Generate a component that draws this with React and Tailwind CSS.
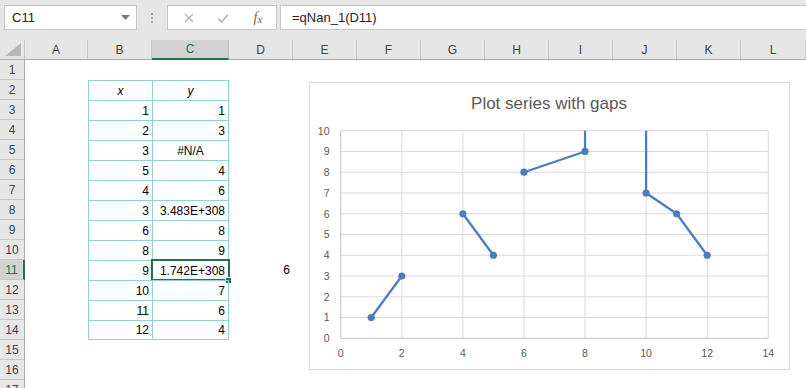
import React from 'react'

const cols = [
  { id: 'A', w: 63 },
  { id: 'B', w: 64 },
  { id: 'C', w: 77 },
  { id: 'D', w: 64 },
  { id: 'E', w: 64 },
  { id: 'F', w: 64 },
  { id: 'G', w: 64 },
  { id: 'H', w: 64 },
  { id: 'I', w: 64 },
  { id: 'J', w: 64 },
  { id: 'K', w: 64 },
  { id: 'L', w: 65 },
]

const xs = [1, 2, 3, 5, 4, 3, 6, 8, 9, 10, 11, 12]
const ys = ['1', '3', '#N/A', '4', '6', '3.483E+308', '8', '9', '1.742E+308', '7', '6', '4']

const cells = { B2: { t: 'x', italic: true, center: true }, C2: { t: 'y', italic: true, center: true }, D11: { t: '6' } }
xs.forEach((x, i) => {
  cells['B' + (i + 3)] = { t: String(x) }
  cells['C' + (i + 3)] = { t: ys[i], center: ys[i] === '#N/A' }
})

const rows = Array.from({ length: 17 }, (_, i) => i + 1)

const px = (x) => 30.7 + 30.54 * x
const py = (y) => 255.3 - 20.76 * y

const segments = [
  [[1, 1], [2, 3]],
  [[4, 6], [5, 4]],
  [[6, 8], [8, 9], [8, 10]],
  [[10, 10], [10, 7], [11, 6], [12, 4]],
]
const points = [[1, 1], [2, 3], [4, 6], [5, 4], [6, 8], [8, 9], [10, 7], [11, 6], [12, 4]]

function Chart() {
  const font = "'Liberation Sans', Arial, sans-serif"
  return (
    <div className="absolute left-[309px] top-[82px] w-[481px] h-[288px] border border-[#d9d9d9] bg-white">
      <svg width="479" height="286" className="block">
        <text x="239" y="26" textAnchor="middle" fontSize="17" fill="#595959" fontFamily={font}>
          Plot series with gaps
        </text>
        {Array.from({ length: 10 }, (_, i) => i + 1).map((y) => (
          <line key={'h' + y} x1={px(0)} x2={px(14)} y1={py(y)} y2={py(y)} stroke="#d9d9d9" strokeWidth="1" />
        ))}
        {[2, 4, 6, 8, 10, 12, 14].map((x) => (
          <line key={'v' + x} x1={px(x)} x2={px(x)} y1={py(10)} y2={py(0)} stroke="#d9d9d9" strokeWidth="1" />
        ))}
        <line x1={px(0)} x2={px(14)} y1={py(0)} y2={py(0)} stroke="#bfbfbf" strokeWidth="1" />
        <line x1={px(0)} x2={px(0)} y1={py(10)} y2={py(0)} stroke="#bfbfbf" strokeWidth="1" />
        {Array.from({ length: 11 }, (_, i) => i).map((y) => (
          <text key={'yl' + y} x="19.5" y={py(y) + 3.8} textAnchor="end" fontSize="10.5" fill="#595959" fontFamily={font}>
            {y}
          </text>
        ))}
        {[0, 2, 4, 6, 8, 10, 12, 14].map((x) => (
          <text key={'xl' + x} x={px(x)} y="273.7" textAnchor="middle" fontSize="10.5" fill="#595959" fontFamily={font}>
            {x}
          </text>
        ))}
        {segments.map((s, i) => (
          <polyline
            key={'s' + i}
            points={s.map(([x, y]) => `${px(x)},${py(y)}`).join(' ')}
            fill="none"
            stroke="#4a7dbb"
            strokeWidth="2.25"
            strokeLinejoin="round"
          />
        ))}
        {points.map(([x, y], i) => (
          <circle key={'p' + i} cx={px(x)} cy={py(y)} r="3.6" fill="#4a7dbb" />
        ))}
      </svg>
    </div>
  )
}

function FormulaBar() {
  return (
    <div className="h-[40px] bg-[#e6e6e6] flex items-start pt-[5px] pl-[4px]">
      <div className="w-[133px] h-[25px] bg-white border border-[#c6c6c6] flex items-center justify-between pl-[7px] pr-[6px] text-[13px] text-[#222]">
        <span>C11</span>
        <svg width="9" height="5" viewBox="0 0 9 5">
          <path d="M0 0 L9 0 L4.5 5 Z" fill="#7a7a7a" />
        </svg>
      </div>
      <div className="ml-[14px] mt-[8px] flex flex-col gap-[2px]">
        <div className="w-[2px] h-[2px] bg-[#a8a8a8]" />
        <div className="w-[2px] h-[2px] bg-[#a8a8a8]" />
        <div className="w-[2px] h-[2px] bg-[#a8a8a8]" />
      </div>
      <div className="ml-[14px] w-[110px] h-[25px] bg-white border border-[#c6c6c6] flex items-center">
        <div className="w-[38px] flex justify-center pl-[3px]">
          <svg width="10" height="10" viewBox="0 0 10 10">
            <path d="M1 1 L9 9 M9 1 L1 9" stroke="#b4b4b4" strokeWidth="1.3" />
          </svg>
        </div>
        <div className="w-[34px] flex justify-center">
          <svg width="12" height="10" viewBox="0 0 12 10">
            <path d="M1 5.5 L4.5 9 L11 1.5" stroke="#b4b4b4" strokeWidth="1.6" fill="none" />
          </svg>
        </div>
        <div className="w-[36px] flex justify-center font-['Liberation_Serif'] italic text-[#6a6a6a] leading-none">
          <span className="text-[14px]">f</span>
          <span className="text-[11px] mt-[3px]">x</span>
        </div>
      </div>
      <div className="ml-[3px] flex-1 h-[25px] bg-white border border-[#c6c6c6] border-r-0 flex items-center pl-[11px] text-[13px] text-[#222]">
        =qNan_1(D11)
      </div>
    </div>
  )
}

function HeaderRow() {
  return (
    <div className="flex h-[20px]">
      <div className="w-[25px] shrink-0 bg-[#e6e6e6] border-r border-[#c6c6c6] border-b border-b-[#ababab] relative">
        <svg width="16" height="13" viewBox="0 0 16 13" className="absolute left-[5px] top-[3px]">
          <path d="M16 0 L16 13 L0 13 Z" fill="#b7b7b7" />
        </svg>
      </div>
      {cols.map((c) =>
        c.id === 'C' ? (
          <div
            key={c.id}
            style={{ width: c.w }}
            className="shrink-0 bg-[#d2d2d2] border-r border-[#bdbdbd] border-b-2 border-b-[#217346] flex items-center justify-center text-[12px] text-[#217346]"
          >
            {c.id}
          </div>
        ) : (
          <div
            key={c.id}
            style={{ width: c.w }}
            className="shrink-0 bg-[#e6e6e6] border-r border-[#c6c6c6] border-b border-b-[#ababab] flex items-center justify-center text-[12px] text-[#444]"
          >
            {c.id}
          </div>
        )
      )}
    </div>
  )
}

function Cell({ col, row }) {
  const id = col.id + row
  const data = cells[id]
  const inTable = (col.id === 'B' || col.id === 'C') && row >= 2 && row <= 14
  const selected = id === 'C11'
  return (
    <div
      style={{ width: col.w }}
      className={
        'shrink-0 relative flex items-center px-[3px] text-[12px] text-black ' +
        (inTable ? 'border-l border-t border-[#92d0dc] ' : '') +
        (inTable && col.id === 'C' ? 'border-r ' : '') +
        (inTable && row === 14 ? 'border-b ' : '') +
        (data && data.center ? 'justify-center ' : 'justify-end ') +
        (data && data.italic ? 'italic ' : '')
      }
    >
      {data ? data.t : null}
      {selected && (
        <>
          <div className="absolute -left-[2px] -top-[2px] -right-[2px] -bottom-[1px] border-2 border-[#217346]" />
          <div className="absolute -right-[4px] -bottom-[4px] w-[7px] h-[7px] bg-[#217346] border border-white" />
        </>
      )}
    </div>
  )
}

function Row({ row }) {
  const sel = row === 11
  return (
    <div className="flex h-[20px]">
      <div
        className={
          'w-[25px] shrink-0 border-b border-[#c6c6c6] flex items-center justify-center text-[12px] ' +
          (sel ? 'bg-[#d2d2d2] border-r-2 border-r-[#217346] text-[#217346]' : 'bg-[#e6e6e6] border-r border-r-[#ababab] text-[#444]')
        }
      >
        {row}
      </div>
      {cols.map((c) => (
        <Cell key={c.id} col={c} row={row} />
      ))}
    </div>
  )
}

export default function App() {
  return (
    <div className="w-[806px] h-[388px] overflow-hidden bg-white relative font-['Liberation_Sans',Arial,sans-serif]">
      <FormulaBar />
      <HeaderRow />
      {rows.map((r) => (
        <Row key={r} row={r} />
      ))}
      <Chart />
    </div>
  )
}
